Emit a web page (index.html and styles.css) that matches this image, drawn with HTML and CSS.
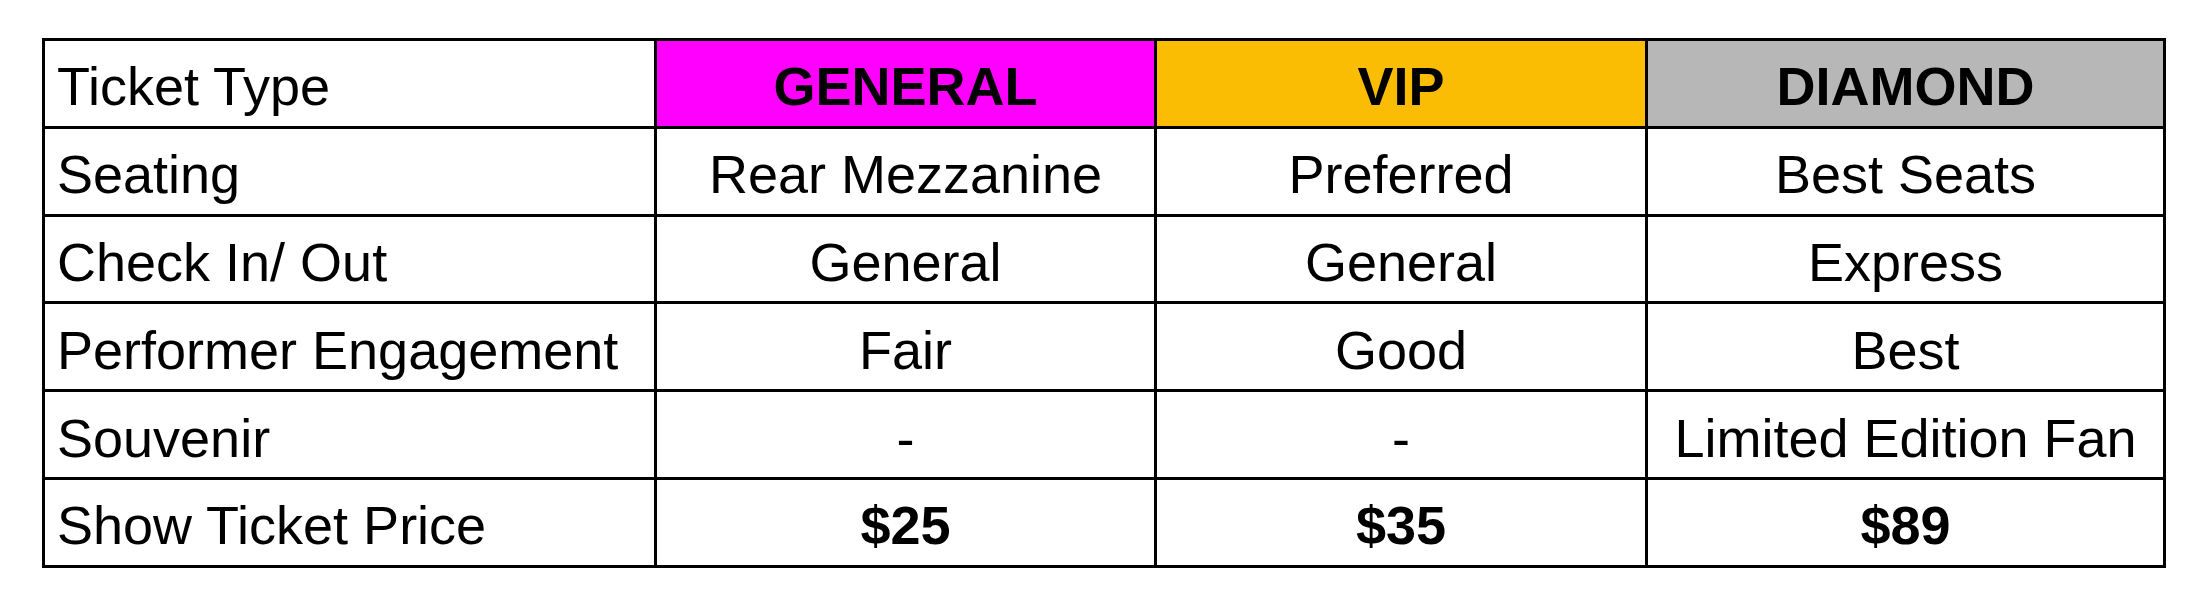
FILE: index.html
```html
<!DOCTYPE html>
<html lang="en">
<head>
<meta charset="utf-8">
<title>Ticket Types</title>
<link rel="stylesheet" href="styles.css">
</head>
<body>
<div class="page">
  <div class="grid" role="table">
    <div class="cell label">Ticket Type</div>
    <div class="cell head general">GENERAL</div>
    <div class="cell head vip">VIP</div>
    <div class="cell head diamond">DIAMOND</div>

    <div class="cell label">Seating</div>
    <div class="cell">Rear Mezzanine</div>
    <div class="cell">Preferred</div>
    <div class="cell">Best Seats</div>

    <div class="cell label">Check In/ Out</div>
    <div class="cell">General</div>
    <div class="cell">General</div>
    <div class="cell">Express</div>

    <div class="cell label">Performer Engagement</div>
    <div class="cell">Fair</div>
    <div class="cell">Good</div>
    <div class="cell">Best</div>

    <div class="cell label">Souvenir</div>
    <div class="cell">-</div>
    <div class="cell">-</div>
    <div class="cell">Limited Edition Fan</div>

    <div class="cell label">Show Ticket Price</div>
    <div class="cell price">$25</div>
    <div class="cell price">$35</div>
    <div class="cell price">$89</div>
  </div>
</div>
</body>
</html>
```

FILE: styles.css
```css
html, body {
  margin: 0;
  padding: 0;
  background: #ffffff;
}

.page {
  padding: 38px 0 0 42px;
}

.grid {
  display: inline-grid;
  grid-template-columns: 609px 497px 488px 515px;
  grid-template-rows: repeat(6, 84.8px);
  gap: 3px;
  padding: 3px;
  background: #000000;
  font-family: "Liberation Sans", Arial, sans-serif;
  font-size: 54px;
  color: #000000;
}

.cell {
  background: #ffffff;
  display: flex;
  align-items: center;
  justify-content: center;
  padding-top: 6px;
  box-sizing: border-box;
  white-space: nowrap;
  overflow: hidden;
}

.label {
  justify-content: flex-start;
  padding-left: 12px;
}

.head {
  font-weight: bold;
}

.general {
  background: #ff00ff;
}

.vip {
  background: #fbbc04;
}

.diamond {
  background: #b7b7b7;
}

.price {
  font-weight: bold;
}
```
